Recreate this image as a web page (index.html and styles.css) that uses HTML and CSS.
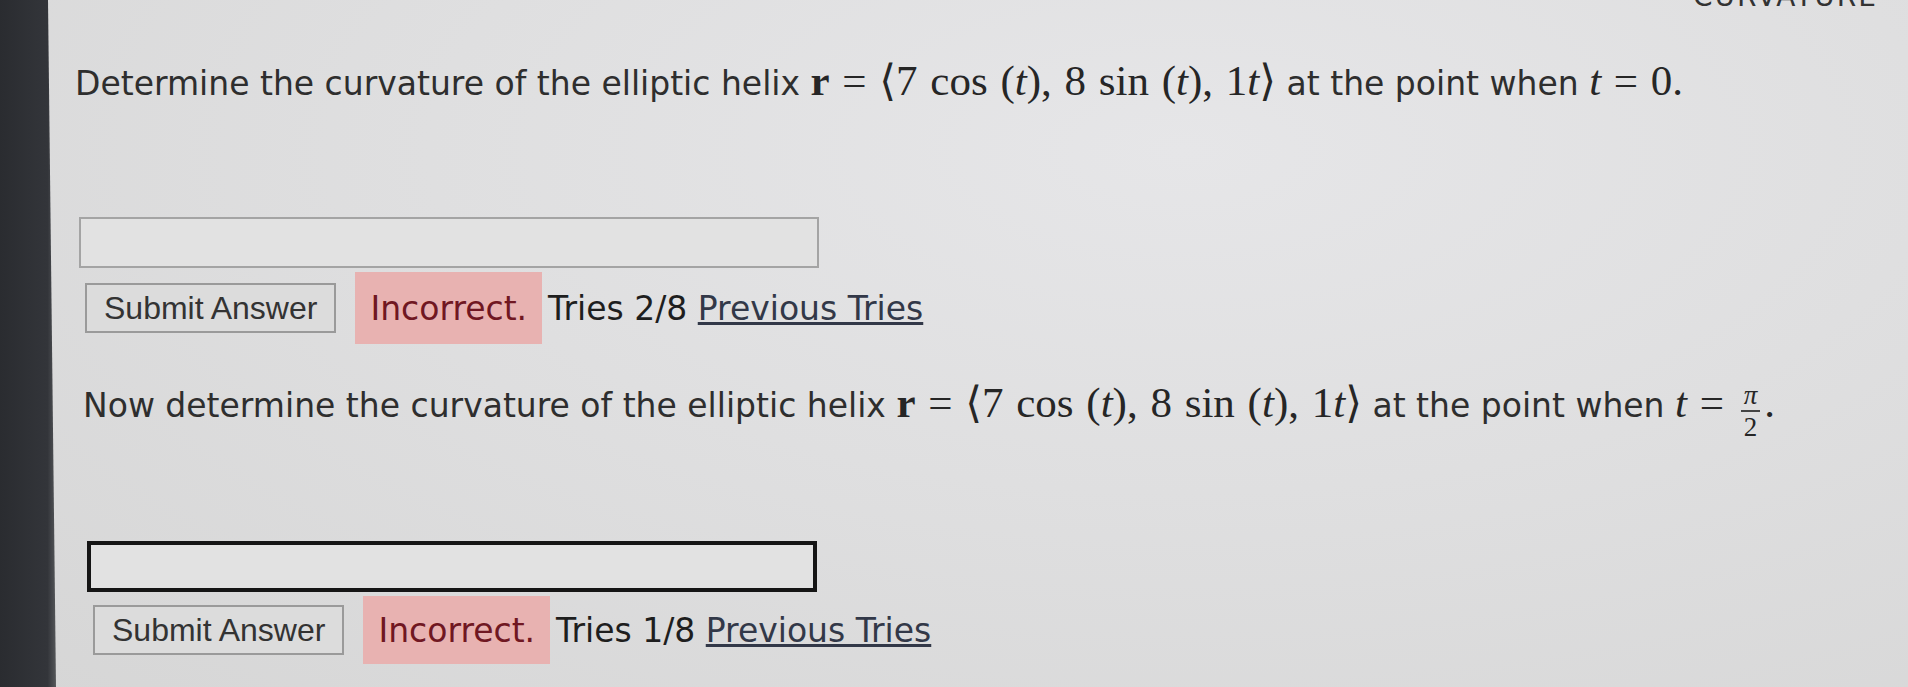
FILE: index.html
```html
<!DOCTYPE html>
<html lang="en">
<head>
    <meta charset="UTF-8">
    <meta name="viewport" content="width=device-width, initial-scale=1.0">
    <title>Curvature</title>
    <link rel="stylesheet" href="styles.css">
</head>
<body>
    <div class="frame"></div>
    <div class="page">
        <div class="title">CURVATURE</div>

        <div class="question q1">
            <p class="prompt">Determine the curvature of the elliptic helix
                <span class="math"><b>r</b> = ⟨7 cos (<i>t</i>), 8 sin (<i>t</i>), 1<i>t</i>⟩</span>
                at the point when <span class="math"><i>t</i> = 0.</span></p>
            <input type="text" class="answer">
            <div class="status">
                <button type="button">Submit Answer</button>
                <span class="incorrect">Incorrect.</span>
                <span class="tries">Tries 2/8 <a href="#">Previous Tries</a></span>
            </div>
        </div>

        <div class="question q2">
            <p class="prompt">Now determine the curvature of the elliptic helix
                <span class="math"><b>r</b> = ⟨7 cos (<i>t</i>), 8 sin (<i>t</i>), 1<i>t</i>⟩</span>
                at the point when <span class="math"><i>t</i> = <span class="frac"><span class="num"><i>π</i></span><span class="den">2</span></span>.</span></p>
            <input type="text" class="answer focused">
            <div class="status">
                <button type="button">Submit Answer</button>
                <span class="incorrect">Incorrect.</span>
                <span class="tries">Tries 1/8 <a href="#">Previous Tries</a></span>
            </div>
        </div>
    </div>
</body>
</html>
```

FILE: styles.css
```css
* {
    margin: 0;
    padding: 0;
    box-sizing: border-box;
}

body {
    display: flex;
    height: 100vh;
    overflow: hidden;
    font-family: "DejaVu Sans", Verdana, sans-serif;
    color: #2e2e2e;
    background: radial-gradient(ellipse at 62% 22%, #e6e6e8 0%, #dfdfe0 45%, #d6d6d6 100%);
}

.frame {
    width: 56px;
    flex: none;
    background: linear-gradient(90deg, #2a2c30 0%, #33353a 85%, #55575a 100%);
    clip-path: polygon(0 0, 48px 0, 56px 100%, 0 100%);
}

.page {
    position: relative;
    flex: 1;
    padding: 59px 0 0 19px;
}

.title {
    position: absolute;
    top: -17px;
    right: 30px;
    font-size: 28px;
    line-height: 1;
    letter-spacing: 2px;
    color: #333;
}

.prompt {
    height: 50px;
    font-size: 33px;
    line-height: 50px;
    white-space: nowrap;
}

.math {
    font-family: "Liberation Serif", "DejaVu Serif", serif;
    font-size: 43px;
    line-height: 1;
    word-spacing: 2px;
    color: #262626;
}

.math b {
    font-weight: bold;
}

.frac {
    display: inline-flex;
    flex-direction: column;
    vertical-align: 13px;
    margin: 0 4px 0 4px;
    font-size: 27px;
    line-height: 26px;
    text-align: center;
}

.frac .num {
    border-bottom: 2px solid #444;
    padding: 0 3px 2px;
}

.frac .den {
    padding-top: 2px;
}

.answer {
    display: block;
    width: 740px;
    height: 51px;
    margin: 108px 0 0 4px;
    border: 2px solid #a4a4a4;
    background: #e2e2e2;
}

.answer.focused {
    width: 730px;
    margin-top: 110px;
    border: 4px solid #151515;
}

.status {
    display: flex;
    align-items: center;
    height: 72px;
    margin-top: 4px;
    font-size: 33px;
}

button {
    height: 50px;
    padding: 0 17px;
    margin: 0 19px 0 10px;
    font-family: "Liberation Sans", Arial, sans-serif;
    font-size: 32px;
    color: #333;
    background: #dcdcdc;
    border: 2px solid #9a9a9a;
}

.incorrect {
    display: flex;
    align-items: center;
    height: 100%;
    padding: 0 15px;
    color: #701722;
    background: #e8b2b1;
}

.tries {
    margin-left: 6px;
    color: #1e1e1e;
}

.tries a {
    color: #323848;
}

.q2 {
    margin-top: 37px;
    padding-left: 8px;
}

.q2 .status {
    height: 68px;
}
```
